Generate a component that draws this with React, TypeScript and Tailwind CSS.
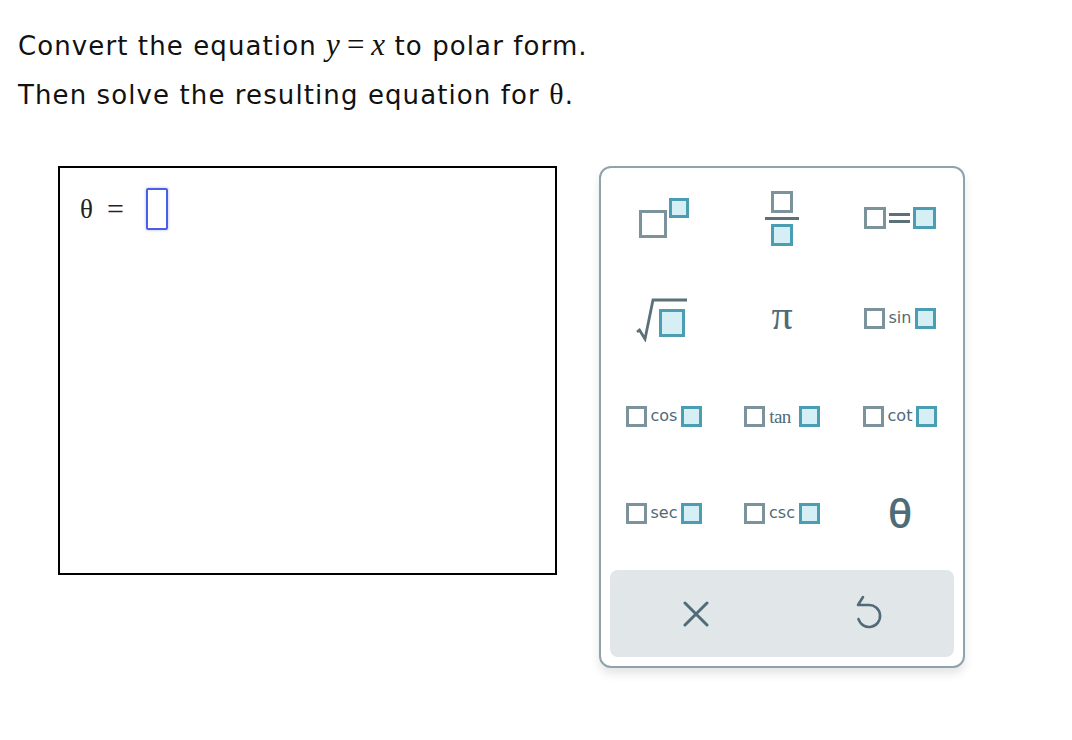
import React from "react";

/* key pieces */
const grayBox = "box-border border-[3px] border-[#7d939b] bg-white";
const blueBox = "box-border border-[3px] border-[#4a9db2] bg-[#d6eff4]";
const keyText = "text-[#4f6b77]";

function TrigKey({ label, serif }: { label: string; serif?: boolean }) {
  return (
    <div className="flex items-center gap-[4px]">
      <div className={`${grayBox} w-[21px] h-[21px]`} />
      <span
        className={`${keyText} leading-none ${
          serif ? "text-[19px] tracking-[-0.5px] mr-[4px]" : "text-[16px]"
        }`}
        style={{ fontFamily: serif ? '"Liberation Serif", serif' : '"DejaVu Sans", sans-serif' }}
      >
        {label}
      </span>
      <div className={`${blueBox} w-[21px] h-[21px]`} />
    </div>
  );
}

function Key({ children }: { children: React.ReactNode }) {
  return <div className="flex items-center justify-center">{children}</div>;
}

export default function App() {
  return (
    <div
      className="w-[1072px] h-[740px] bg-white text-[#111]"
      style={{ fontFamily: '"DejaVu Sans", Verdana, sans-serif' }}
    >
      {/* Question */}
      <div className="pt-[21px] pl-[18px] text-[26px] leading-[48px] tracking-[1.1px]">
        <p>
          Convert the equation{" "}
          <span className="text-[31px] tracking-normal" style={{ fontFamily: '"Liberation Serif", serif' }}>
            <span className="italic">y</span>
            <span className="mx-[7px]">=</span>
            <span className="italic">x</span>
          </span>{" "}
          to polar form.
        </p>
        <p>
          Then solve the resulting equation for{" "}
          <span className="text-[30px]" style={{ fontFamily: '"Liberation Serif", serif' }}>
            θ
          </span>
          .
        </p>
      </div>

      <div className="mt-[47px] flex items-start">
        {/* Answer box */}
        <div className="ml-[58px] w-[499px] h-[409px] border-2 border-black">
          <div
            className="flex items-center pt-[20px] pl-[20px] text-[27px] text-[#222]"
            style={{ fontFamily: '"Liberation Serif", serif' }}
          >
            <span className="leading-none">θ</span>
            <span className="ml-[14px] leading-none text-[30px]">=</span>
            <div className="ml-[22px] w-[22px] h-[42px] rounded-[2px] border-2 border-[#4a5fe6] shadow-[0_0_3px_rgba(70,95,230,0.45)]" />
          </div>
        </div>

        {/* Keypad */}
        <div className="ml-[42px] w-[366px] h-[502px] rounded-[12px] border-2 border-[#8fa3ab] bg-white shadow-[0_6px_10px_rgba(0,0,0,0.10)] flex flex-col">
          <div className="px-[4px] grid grid-cols-3 grid-rows-[100px_100px_96px_98px]">
            {/* superscript */}
            <Key>
              <div className="flex items-start gap-[2px]">
                <div className={`${grayBox} w-[28px] h-[28px] mt-[12px]`} />
                <div className={`${blueBox} w-[20px] h-[20px]`} />
              </div>
            </Key>
            {/* fraction */}
            <Key>
              <div className="flex flex-col items-center">
                <div className={`${grayBox} w-[22px] h-[22px]`} />
                <div className="w-[34px] h-[3px] bg-[#5b7079] my-[4px]" />
                <div className={`${blueBox} w-[22px] h-[22px]`} />
              </div>
            </Key>
            {/* equals */}
            <Key>
              <div className="flex items-center gap-[3px]">
                <div className={`${grayBox} w-[22px] h-[22px]`} />
                <div className="flex flex-col gap-[4px]">
                  <div className="w-[21px] h-[3px] bg-[#5b7079]" />
                  <div className="w-[21px] h-[3px] bg-[#5b7079]" />
                </div>
                <div className={`${blueBox} w-[23px] h-[22px]`} />
              </div>
            </Key>

            {/* sqrt */}
            <Key>
              <svg width="58" height="48" viewBox="0 0 58 48" className="ml-[-4px]">
                <path
                  d="M4 38 L6.5 36 L12 45 L20 6 L54 6"
                  fill="none"
                  stroke="#5b7079"
                  strokeWidth="2.8"
                  strokeLinejoin="miter"
                />
                <rect x="27.5" y="16.5" width="23" height="25" fill="#d6eff4" stroke="#4a9db2" strokeWidth="3" />
              </svg>
            </Key>
            {/* pi */}
            <Key>
              <span
                className={`${keyText} text-[42px] leading-none mt-[-6px]`}
                style={{ fontFamily: '"Liberation Serif", serif' }}
              >
                π
              </span>
            </Key>
            <Key>
              <TrigKey label="sin" />
            </Key>

            <Key>
              <TrigKey label="cos" />
            </Key>
            <Key>
              <TrigKey label="tan" serif />
            </Key>
            <Key>
              <TrigKey label="cot" />
            </Key>

            <Key>
              <TrigKey label="sec" />
            </Key>
            <Key>
              <TrigKey label="csc" />
            </Key>
            <Key>
              <span
                className={`${keyText} text-[40px] font-semibold leading-none`}
                style={{ fontFamily: '"Open Sans", sans-serif' }}
              >
                θ
              </span>
            </Key>
          </div>

          {/* bottom actions */}
          <div className="mt-[8px] mx-[9px] h-[87px] rounded-[8px] bg-[#e1e6e9] grid grid-cols-2">
            <div className="flex items-center justify-center">
              <svg width="26" height="26" viewBox="0 0 26 26">
                <path d="M2 2 L24 24 M24 2 L2 24" stroke="#4f6b77" strokeWidth="3" strokeLinecap="round" />
              </svg>
            </div>
            <div className="flex items-center justify-center">
              <svg width="30" height="36" viewBox="0 0 30 36" className="mt-[-2px] ml-[2px]">
                <path
                  d="M9 2 L4 10 L15 10 A11 11 0 1 1 4.5 24"
                  fill="none"
                  stroke="#4f6b77"
                  strokeWidth="2.6"
                  strokeLinecap="round"
                  strokeLinejoin="round"
                />
              </svg>
            </div>
          </div>
        </div>
      </div>
    </div>
  );
}
